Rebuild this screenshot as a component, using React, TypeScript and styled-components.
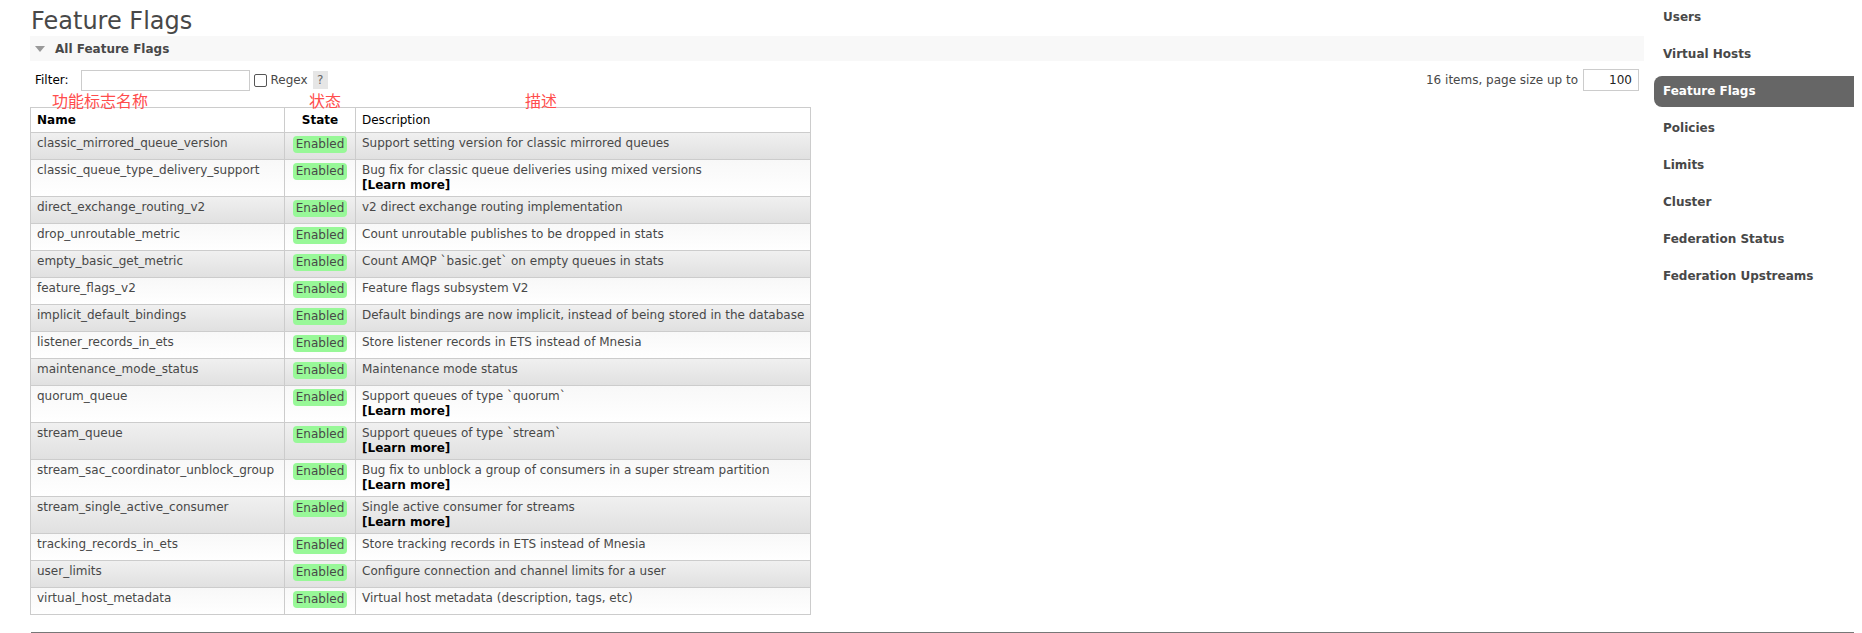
import styled, { createGlobalStyle } from "styled-components";

const GlobalStyle = createGlobalStyle`
  body {
    margin: 0;
    font-family: "DejaVu Sans", Verdana, sans-serif;
    font-size: 12px;
    color: #484848;
    background: #fff;
  }
`;

interface FeatureFlag {
  name: string;
  description: string;
  learnMore?: boolean;
}

const flags: FeatureFlag[] = [
  { name: "classic_mirrored_queue_version", description: "Support setting version for classic mirrored queues" },
  { name: "classic_queue_type_delivery_support", description: "Bug fix for classic queue deliveries using mixed versions", learnMore: true },
  { name: "direct_exchange_routing_v2", description: "v2 direct exchange routing implementation" },
  { name: "drop_unroutable_metric", description: "Count unroutable publishes to be dropped in stats" },
  { name: "empty_basic_get_metric", description: "Count AMQP `basic.get` on empty queues in stats" },
  { name: "feature_flags_v2", description: "Feature flags subsystem V2" },
  { name: "implicit_default_bindings", description: "Default bindings are now implicit, instead of being stored in the database" },
  { name: "listener_records_in_ets", description: "Store listener records in ETS instead of Mnesia" },
  { name: "maintenance_mode_status", description: "Maintenance mode status" },
  { name: "quorum_queue", description: "Support queues of type `quorum`", learnMore: true },
  { name: "stream_queue", description: "Support queues of type `stream`", learnMore: true },
  { name: "stream_sac_coordinator_unblock_group", description: "Bug fix to unblock a group of consumers in a super stream partition", learnMore: true },
  { name: "stream_single_active_consumer", description: "Single active consumer for streams", learnMore: true },
  { name: "tracking_records_in_ets", description: "Store tracking records in ETS instead of Mnesia" },
  { name: "user_limits", description: "Configure connection and channel limits for a user" },
  { name: "virtual_host_metadata", description: "Virtual host metadata (description, tags, etc)" },
];

const navItems = [
  "Users",
  "Virtual Hosts",
  "Feature Flags",
  "Policies",
  "Limits",
  "Cluster",
  "Federation Status",
  "Federation Upstreams",
];

const Page = styled.div`
  width: 1862px;
  box-sizing: border-box;
  padding: 0 8px 0 30px;
`;

const Columns = styled.div`
  display: flex;
  align-items: flex-start;
`;

const Main = styled.div`
  width: 1614px;
`;

const Title = styled.h1`
  margin: 7px 0 0 1px;
  font-size: 24px;
  line-height: 29px;
  font-weight: normal;
  color: #484848;
`;

const SectionBar = styled.div`
  height: 25px;
  display: flex;
  align-items: center;
  gap: 10px;
  padding-left: 5px;
  background: #f8f8f8;
  font-weight: bold;
  color: #484848;
`;

const Triangle = styled.span`
  width: 0;
  height: 0;
  border-left: 5px solid transparent;
  border-right: 5px solid transparent;
  border-top: 6px solid #999;
`;

const FilterRow = styled.div`
  margin-top: 8px;
  height: 22px;
  display: flex;
  align-items: center;
  justify-content: space-between;
`;

const FilterGroup = styled.div`
  display: flex;
  align-items: center;
  padding-left: 5px;
  color: #000;
`;

const FilterInput = styled.input`
  box-sizing: border-box;
  width: 169px;
  height: 21px;
  margin: 0 4px 0 12px;
  border: 1px solid #ccc;
  padding: 0 4px;
`;

const CheckBox = styled.span`
  width: 11px;
  height: 11px;
  border: 1px solid #555;
  border-radius: 2px;
  margin-right: 4px;
`;

const RegexLabel = styled.span`
  color: #484848;
`;

const HelpTag = styled.span`
  margin-left: 5px;
  padding: 0 4px;
  min-width: 7px;
  height: 18px;
  line-height: 18px;
  text-align: center;
  background: #e6e6e6;
  color: #666;
`;

const PagingGroup = styled.div`
  display: flex;
  align-items: center;
  gap: 5px;
  padding-right: 5px;
`;

const PageSizeInput = styled.input`
  box-sizing: border-box;
  width: 56px;
  height: 22px;
  border: 1px solid #ccc;
  padding: 0 6px;
  text-align: right;
  font-family: "DejaVu Sans", Verdana, sans-serif;
  font-size: 12px;
  color: #222;
`;

const NoteRow = styled.div`
  height: 16px;
  display: flex;
  padding-top: 1px;
  box-sizing: border-box;
`;

const Note = styled.span<{ $offset: number }>`
  margin-left: ${(p) => p.$offset}px;
  font-family: "Noto Sans CJK SC", sans-serif;
  font-size: 16px;
  line-height: 16px;
  color: #ff4d4d;
`;

const FlagTable = styled.table`
  width: 780px;
  table-layout: fixed;
  border-collapse: collapse;
  border: 1px solid #ccc;
`;

const HeadCell = styled.th<{ $align?: string; $bold?: boolean }>`
  padding: 5px 6px;
  line-height: 14px;
  text-align: ${(p) => p.$align ?? "left"};
  font-weight: ${(p) => (p.$bold ? "bold" : "normal")};
  color: #000;
  background: #fff;
  border: 1px solid #ccc;
`;

const Row = styled.tr<{ $alt: boolean }>`
  background-image: ${(p) =>
    p.$alt
      ? "linear-gradient(to bottom, #f0f0f0 0%, #e0e0e0 100%)"
      : "linear-gradient(to bottom, #f8f8f8 0%, #ffffff 100%)"};
`;

const Cell = styled.td<{ $center?: boolean }>`
  height: 20px;
  padding: 3px 6px;
  line-height: 15px;
  vertical-align: top;
  white-space: nowrap;
  text-align: ${(p) => (p.$center ? "center" : "left")};
  border: 1px solid #ccc;
`;

const StatusBadge = styled.span`
  display: inline-block;
  vertical-align: top;
  padding: 2px 3px;
  line-height: 13px;
  border-radius: 4px;
  background: #98f898;
  color: #484848;
`;

const LearnMore = styled.div`
  font-weight: bold;
  color: #000;
`;

const Sidebar = styled.ul`
  list-style: none;
  margin: 2px 0 0 10px;
  padding: 0;
  width: 200px;
  display: flex;
  flex-direction: column;
  gap: 6px;
`;

const NavItem = styled.li<{ $active?: boolean }>`
  height: 31px;
  line-height: 31px;
  padding-left: 9px;
  border-radius: 8px 0 0 8px;
  font-weight: bold;
  color: ${(p) => (p.$active ? "#fff" : "#484848")};
  background: ${(p) => (p.$active ? "#666" : "transparent")};
`;

const Footer = styled.div`
  margin-top: 17px;
  margin-left: 1px;
  border-top: 1px solid #777;
`;

export default function App() {
  return (
    <>
      <GlobalStyle />
      <Page>
        <Columns>
          <Main>
            <Title>Feature Flags</Title>
            <SectionBar>
              <Triangle />
              All Feature Flags
            </SectionBar>
            <FilterRow>
              <FilterGroup>
                Filter:
                <FilterInput />
                <CheckBox />
                <RegexLabel>Regex</RegexLabel>
                <HelpTag>?</HelpTag>
              </FilterGroup>
              <PagingGroup>
                16 items, page size up to
                <PageSizeInput defaultValue="100" />
              </PagingGroup>
            </FilterRow>
            <NoteRow>
              <Note $offset={22}>功能标志名称</Note>
              <Note $offset={161}>状态</Note>
              <Note $offset={184}>描述</Note>
            </NoteRow>
            <FlagTable>
              <colgroup>
                <col style={{ width: 254 }} />
                <col style={{ width: 71 }} />
                <col style={{ width: 455 }} />
              </colgroup>
              <thead>
                <tr>
                  <HeadCell $bold>Name</HeadCell>
                  <HeadCell $bold $align="center">
                    State
                  </HeadCell>
                  <HeadCell>Description</HeadCell>
                </tr>
              </thead>
              <tbody>
                {flags.map((flag, i) => (
                  <Row key={flag.name} $alt={i % 2 === 0}>
                    <Cell>{flag.name}</Cell>
                    <Cell $center>
                      <StatusBadge>Enabled</StatusBadge>
                    </Cell>
                    <Cell>
                      {flag.description}
                      {flag.learnMore && <LearnMore>[Learn more]</LearnMore>}
                    </Cell>
                  </Row>
                ))}
              </tbody>
            </FlagTable>
          </Main>
          <Sidebar>
            {navItems.map((item) => (
              <NavItem key={item} $active={item === "Feature Flags"}>
                {item}
              </NavItem>
            ))}
          </Sidebar>
        </Columns>
        <Footer />
      </Page>
    </>
  );
}
